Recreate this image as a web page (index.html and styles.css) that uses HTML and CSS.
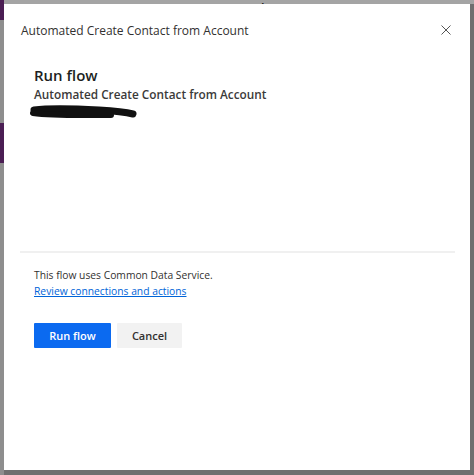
FILE: index.html
```html
<!DOCTYPE html>
<html lang="en">
<head>
  <meta charset="UTF-8">
  <meta name="viewport" content="width=device-width, initial-scale=1.0">
  <title>Run flow</title>
  <link rel="stylesheet" href="styles.css">
</head>
<body>
  <div class="app">
    <aside class="rail">
      <span class="rail-mark rail-top"></span>
      <span class="rail-mark rail-mid"></span>
    </aside>
    <main class="grid">
      <div class="grid-row">
        <span class="account">A. Datum Corporation (sample)</span>
        <span class="amount">$10,000.00</span>
        <span class="qty">2,000</span>
      </div>
    </main>
  </div>

  <!-- Run flow dialog -->
  <div class="dialog" role="dialog">
    <div class="dialog-header">
      <span class="dialog-title">Automated Create Contact from Account</span>
      <button class="close-btn" aria-label="Close">
        <svg width="10" height="10" viewBox="0 0 10 10">
          <path d="M0.5 0.5 L9.5 9.5 M9.5 0.5 L0.5 9.5" stroke="#555" stroke-width="1" fill="none"/>
        </svg>
      </button>
    </div>
    <div class="dialog-body">
      <h2>Run flow</h2>
      <p class="flow-name">Automated Create Contact from Account</p>
      <svg class="redact" width="110" height="16" viewBox="0 0 110 16">
        <path d="M5 6 C22 4 50 5 70 6 C86 7 96 8 104 10" stroke="#111" stroke-width="7" stroke-linecap="round" fill="none"/>
        <path d="M4 9 C25 12 55 11 82 11" stroke="#111" stroke-width="6" stroke-linecap="round" fill="none"/>
      </svg>
    </div>
    <div class="dialog-footer">
      <p class="note">This flow uses Common Data Service.</p>
      <a href="#" class="review-link">Review connections and actions</a>
      <div class="actions">
        <button class="primary-btn">Run flow</button>
        <button class="default-btn">Cancel</button>
      </div>
    </div>
  </div>
</body>
</html>
```

FILE: styles.css
```css
body {
  margin: 0;
  font-family: "Open Sans", "Noto Sans", Arial, sans-serif;
  color: #323130;
  background-color: #7c7c7c;
  overflow: hidden;
}

.app {
  display: flex;
  height: 475px;
}

.rail {
  width: 4px;
  background-color: #8e8e8e;
  display: flex;
  flex-direction: column;
}

.rail-mark {
  display: block;
  width: 4px;
  background-color: #4b1e54;
}

.rail-top {
  height: 20px;
}

.rail-mid {
  height: 40px;
  margin-top: 103px;
}

.grid {
  flex: 1;
  background-color: #6f6f6f;
}

.grid-row {
  display: flex;
  align-items: flex-start;
  height: 4px;
  overflow: hidden;
  background-color: #a4a4a4;
  font-size: 18px;
  line-height: 20px;
  color: #222;
}

.account {
  margin-left: 16px;
}

.amount {
  margin-left: auto;
  font-size: 14px;
}

.qty {
  margin: 0 4px 0 28px;
  font-size: 14px;
}

/* dialog */
.dialog {
  position: absolute;
  top: 4px;
  left: 4px;
  width: 466px;
  height: 466px;
  background-color: #fff;
  display: flex;
  flex-direction: column;
}

.dialog-header {
  display: flex;
  align-items: center;
  justify-content: space-between;
  padding: 16px 19px 0 17px;
  height: 20px;
}

.dialog-title {
  font-size: 12px;
  color: #323130;
}

.close-btn {
  border: none;
  background: none;
  padding: 0;
  width: 10px;
  height: 10px;
  display: flex;
  cursor: pointer;
}

.dialog-body {
  padding: 23px 0 0 14px;
  height: 188px;
  border-bottom: 2px solid #f0f0f0;
  margin: 0 15px 0 16px;
}

.dialog-body h2 {
  margin: 0;
  font-size: 15px;
  font-weight: 600;
  line-height: 24px;
  color: #201f1e;
}

.flow-name {
  margin: -2px 0 0;
  font-size: 11.8px;
  font-weight: 600;
  line-height: 18px;
  color: #3b3a39;
}

.redact {
  display: block;
  margin: 1px 0 0 -5px;
}

.dialog-footer {
  padding: 14px 30px 0 30px;
}

.note {
  margin: 0;
  font-size: 10.3px;
  line-height: 16px;
  color: #323130;
}

.review-link {
  display: block;
  width: max-content;
  font-size: 10.3px;
  line-height: 16px;
  color: #0064d8;
  text-decoration: underline;
}

.actions {
  display: flex;
  gap: 6px;
  margin-top: 24px;
}

.actions button {
  height: 25px;
  border: none;
  border-radius: 1px;
  font-family: inherit;
  font-size: 11px;
  font-weight: 600;
  cursor: pointer;
}

.primary-btn {
  width: 77px;
  background-color: #0b6af0;
  color: #fff;
}

.default-btn {
  width: 65px;
  background-color: #f2f2f2;
  color: #323130;
}
```
